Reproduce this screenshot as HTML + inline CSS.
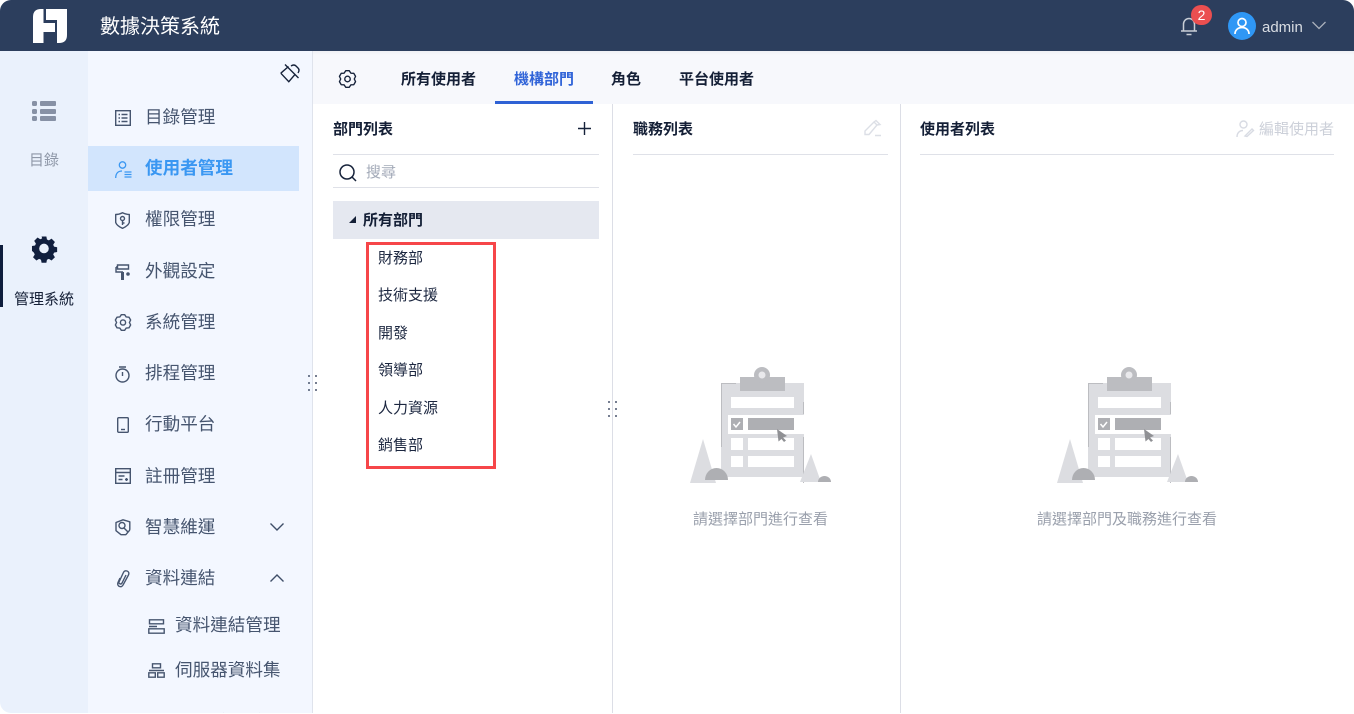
<!DOCTYPE html>
<html lang="zh-Hant"><head><meta charset="utf-8"><style>
html,body{margin:0;padding:0;background:#fff}
body{width:1354px;height:714px;position:relative;overflow:hidden;font-family:"Liberation Sans","Noto Sans CJK TC",sans-serif;color:#141f36}
.a{position:absolute;white-space:nowrap}
svg{position:absolute;overflow:visible}
#app{position:absolute;left:0;top:0;width:1354px;height:713px;border-radius:11px;overflow:hidden;background:#fff}
.m{position:absolute;left:145px;font-size:17.6px;line-height:26px;color:#46556f;white-space:nowrap}
.i{fill:none;stroke:#46556f;stroke-width:1.4}
.h{position:absolute;font-size:15px;font-weight:700;line-height:20px;color:#141f36;white-space:nowrap}
.l{position:absolute;left:378px;font-size:15px;line-height:20px;color:#1c2740;white-space:nowrap}
.ln{position:absolute;height:1px;background:#dfe1e8}
.d{position:absolute;width:2px;height:2px;background:#4a566e;border-radius:1px}
</style></head><body><div id="app">
<div class="a" style="left:0;top:0;width:1354px;height:51px;background:#2c3e5d"></div>
<svg style="left:33px;top:9px" width="34" height="34" viewBox="0 0 34 34"><path fill="#fff" d="M0 34V8Q0 0 8 0h2.500V14H22v9H10.500v11z"/><path fill="#fff" d="M13 0h21v26q0 8-8 8h-2V11H13z"/></svg>
<div class="a" style="left:100px;top:13px;font-size:20px;line-height:29px;color:#fff">數據決策系統</div>
<svg style="left:1180px;top:16px" width="18" height="20" viewBox="0 0 18 20" fill="none" stroke="#c9ced6" stroke-width="1.5"><path d="M1 15h16M3.500 15V8a5.500 5.500 0 0 1 11 0v7M6.500 18.500h5"/></svg>
<div class="a" style="left:1191px;top:5px;width:21px;height:20px;border-radius:10px;background:#eb4f50;color:#fff;font-size:14px;line-height:20px;text-align:center">2</div>
<div class="a" style="left:1228px;top:12px;width:28px;height:28px;border-radius:14px;background:#2f97f5"></div>
<svg style="left:1234px;top:17px" width="16" height="18" viewBox="0 0 16 18" fill="none" stroke="#fff" stroke-width="1.700"><circle cx="8" cy="5.500" r="4"/><path d="M1 17c0-4 3-6.500 7-6.500s7 2.500 7 6.500"/></svg>
<div class="a" style="left:1262px;top:18px;font-size:15px;line-height:20px;color:#d9dde3">admin</div>
<svg style="left:1312px;top:21px" width="14" height="9" viewBox="0 0 14 9" fill="none" stroke="#aab0bb" stroke-width="1.300"><path d="M.5 1L7 7.500 13.500 1"/></svg>

<div class="a" style="left:0;top:51px;width:88px;height:663px;background:#eaf1fc"></div>
<div class="a" style="left:88px;top:51px;width:224px;height:663px;background:#f3f7ff"></div>
<div class="a" style="left:312px;top:51px;width:1px;height:663px;background:#dfe3ec"></div>
<svg style="left:31px;top:100px" width="26" height="23" viewBox="0 0 26 23" fill="#8791a5"><rect x="1" y="1" width="5" height="5" rx="1.500"/><rect x="1" y="9" width="5" height="5" rx="1.500"/><rect x="1" y="16" width="5" height="5" rx="1.500"/><rect x="9" y="1" width="16" height="5" rx="1"/><rect x="9" y="9" width="16" height="5" rx="1"/><rect x="9" y="16" width="16" height="5" rx="1"/></svg>
<div class="a" style="left:29px;top:151px;font-size:15px;line-height:20px;color:#8f98a8">目錄</div>
<div class="a" style="left:0;top:245px;width:3px;height:62px;background:#0e1d3c"></div>
<svg style="left:31px;top:236px" width="26" height="26" viewBox="0 0 26 26"><path fill="#111f3e" fill-rule="evenodd" d="M10.500 1h5l.6 3.200 2 .9 2.800-1.800 3.500 3.500-1.800 2.800.9 2 3.200.6v5l-3.200.6-.9 2 1.800 2.800-3.500 3.500-2.800-1.800-2 .9-.6 3.200h-5l-.6-3.200-2-.9-2.800 1.800-3.500-3.500 1.800-2.800-.9-2L.5 16v-5l3.200-.6.9-2-1.800-2.800 3.500-3.500 2.800 1.800 2-.9zM13 8.500a5 5 0 1 0 0 10 5 5 0 0 0 0-10z" transform="translate(.5 -.5) scale(.96)"/></svg>
<div class="a" style="left:14px;top:290px;font-size:15px;line-height:20px;color:#141f36">管理系統</div>

<svg style="left:280px;top:64px" width="19" height="19" viewBox="0 0 19 19" fill="none" stroke="#16223a" stroke-width="1.400"><path d="M.8 9.200L8.500 2.500M.8 9.200l8 8.500 6-7M5 .5L18.500 14M11 2q3-2 5 0l2 2q2 2 0 5"/></svg>
<div class="a" style="left:88px;top:146px;width:211px;height:45px;background:#d2e5fd"></div>

<svg style="left:115px;top:110px" width="16" height="16" viewBox="0 0 16 16" class="i"><rect x=".7" y=".7" width="14.600" height="14.600"/><path d="M3.500 4.500h1.500M6.500 4.500h6M3.500 8h1.500M6.500 8h6M3.500 11.500h1.500M6.500 11.500h6"/></svg>
<div class="m" style="top:104px">目錄管理</div>
<svg style="left:115px;top:161px" width="17" height="17" viewBox="0 0 17 17" fill="none" stroke="#3a97f2" stroke-width="1.300"><circle cx="7.500" cy="4" r="3.200"/><path d="M.7 17c0-5 2.800-7 6.300-7M9.500 11h7M9.500 13.500h7M9.500 16h7"/></svg>
<div class="m" style="top:155px;color:#3a97f2;font-weight:700">使用者管理</div>
<svg style="left:115px;top:212px" width="15" height="17" viewBox="0 0 15 17" class="i"><path d="M.7 2.500Q4 2.500 7.500.7 11 2.500 14.300 2.500v8Q13 14 7.500 16.300 2 14 .7 10.500z" stroke-linejoin="round"/><circle cx="7.500" cy="6.500" r="2"/><path d="M7.500 8.500v4.500M7.500 11h2"/></svg>
<div class="m" style="top:206px">權限管理</div>
<svg style="left:115px;top:264px" width="16" height="16" viewBox="0 0 16 16"><path class="i" d="M2.500 1h11v4h-11zM1 3h1.500M1 3v5h7"/><rect x="6" y="8" width="3" height="8" fill="#46556f"/><circle cx="13" cy="10" r="1.800" fill="#46556f"/></svg>
<div class="m" style="top:258px">外觀設定</div>
<svg style="left:115px;top:314px" width="16" height="17" viewBox="0 0 16 17" class="i"><path stroke-linejoin="round" d="M6.340.68H9.660L11.200 2.960 13.940 3.150 15.610 6.030 14.400 8.500 15.610 10.970 13.940 13.850 11.200 14.040 9.660 16.320H6.340L4.800 14.040 2.060 13.850.39 10.970 1.600 8.500.39 6.030 2.060 3.150 4.800 2.960z"/><circle cx="8" cy="8.500" r="2.600"/></svg>
<div class="m" style="top:309px">系統管理</div>
<svg style="left:115px;top:366px" width="15" height="17" viewBox="0 0 15 17" class="i"><circle cx="7.500" cy="9.500" r="6.500"/><path d="M4 1h7M7.500 6v4"/></svg>
<div class="m" style="top:360px">排程管理</div>
<svg style="left:117px;top:417px" width="12" height="16" viewBox="0 0 12 16" class="i"><rect x=".7" y=".7" width="10.600" height="14.600" rx="1"/><path d="M4 12.500h4"/></svg>
<div class="m" style="top:411px">行動平台</div>
<svg style="left:115px;top:468px" width="16" height="16" viewBox="0 0 16 16" class="i"><rect x=".7" y=".7" width="14.600" height="14.600"/><path d="M.7 4.500h14.600M3.500 8h6M3.500 11.500h4M10 11.500h3M11.500 10v3"/></svg>
<div class="m" style="top:463px">註冊管理</div>
<svg style="left:115px;top:519px" width="16" height="17" viewBox="0 0 16 17" class="i"><path d="M8 .8l6.800 2v7.400c0 1-.5 1.500-1 2l-3 3.500H6l-5-4V3.500z" stroke-linejoin="round"/><circle cx="7" cy="6.500" r="3"/><path d="M9 9l4 4"/></svg>
<div class="m" style="top:514px">智慧維運</div>
<svg style="left:270px;top:523px" width="14" height="8" viewBox="0 0 14 8" fill="none" stroke="#3f4e68" stroke-width="1.400"><path d="M.5.500L7 7 13.500.500"/></svg>
<svg style="left:115px;top:570px" width="16" height="18" viewBox="0 0 16 18" class="i"><path d="M5 8L3 12.500c-.8 2 .2 3.500 1.500 4s3 0 3.800-2L13.500 5c.8-2 .2-3.500-1.500-4S9 1 8.200 3L4 12c-.4 1 .5 2 1.500 2s1.400-.5 1.800-1.500L11 5"/></svg>
<div class="m" style="top:565px">資料連結</div>
<svg style="left:270px;top:574px" width="14" height="8" viewBox="0 0 14 8" fill="none" stroke="#3f4e68" stroke-width="1.400"><path d="M.5 7.500L7 1l6.500 6.500"/></svg>
<svg style="left:148px;top:619px" width="17" height="15" viewBox="0 0 17 15" class="i"><path d="M1.500.8h14v4h-14zM.8 9.800h15.400v4.400H.8zM1 7.500h8"/></svg>
<div class="m" style="left:175px;top:612px">資料連結管理</div>
<svg style="left:148px;top:663px" width="17" height="15" viewBox="0 0 17 15" class="i"><path d="M4.500.8h8v4h-8zM.8 9.800h6.500v4.400H.8zM9.700 9.800h6.500v4.400H9.700zM1 7.500h15"/></svg>
<div class="m" style="left:175px;top:657px">伺服器資料集</div>
<div class="m" style="left:175px;top:709px">&#160;模板資料集</div>

<div class="a" style="left:313px;top:51px;width:1041px;height:53px;background:#f7f8fc"></div>
<div class="a" style="left:313px;top:51px;width:1041px;height:4px;background:linear-gradient(#eff0f4,#f7f8fc)"></div>
<svg style="left:339px;top:70px" width="17" height="18" viewBox="0 0 16 17" fill="none" stroke="#16223a" stroke-width="1.300"><path stroke-linejoin="round" d="M6.340.68H9.660L11.200 2.960 13.940 3.150 15.610 6.030 14.400 8.500 15.610 10.970 13.940 13.850 11.200 14.040 9.660 16.320H6.340L4.800 14.040 2.060 13.850.39 10.970 1.600 8.500.39 6.030 2.060 3.150 4.800 2.960z"/><circle cx="8" cy="8.500" r="2.600"/></svg>
<div class="h" style="left:401px;top:70px">所有使用者</div>
<div class="h" style="left:514px;top:70px;color:#3164d8">機構部門</div>
<div class="a" style="left:495px;top:101px;width:98px;height:3px;background:#2f62d5"></div>
<div class="h" style="left:611px;top:70px">角色</div>
<div class="h" style="left:679px;top:70px">平台使用者</div>

<div class="a" style="left:612px;top:104px;width:1px;height:610px;background:#dcdee6"></div>
<div class="a" style="left:900px;top:104px;width:1px;height:610px;background:#dcdee6"></div>
<div class="h" style="left:333px;top:120px">部門列表</div>
<svg style="left:578px;top:122px" width="13" height="13" viewBox="0 0 13 13" stroke="#16223a" stroke-width="1.400"><path d="M6.500 0v13M0 6.500h13"/></svg>
<div class="ln" style="left:333px;top:154px;width:266px"></div>
<svg style="left:339px;top:164px" width="18" height="18" viewBox="0 0 18 18" fill="none" stroke="#16223a" stroke-width="1.500"><circle cx="8" cy="8" r="7"/><path d="M13 13l4 4"/></svg>
<div class="a" style="left:366px;top:163px;font-size:15px;line-height:20px;color:#a3aab8">搜尋</div>
<div class="ln" style="left:333px;top:187px;width:266px"></div>
<div class="a" style="left:333px;top:201px;width:266px;height:38px;background:#e5e8f0"></div>
<svg style="left:349px;top:216px" width="7" height="7" viewBox="0 0 7 7"><path fill="#141f36" d="M7 0v7H0z"/></svg>
<div class="h" style="left:363px;top:211px">所有部門</div>
<div class="a" style="left:366px;top:242px;width:130px;height:227px;box-sizing:border-box;border:3px solid #f64649"></div>
<div class="l" style="top:249px">財務部</div>
<div class="l" style="top:286px">技術支援</div>
<div class="l" style="top:324px">開發</div>
<div class="l" style="top:361px">領導部</div>
<div class="l" style="top:399px">人力資源</div>
<div class="l" style="top:436px">銷售部</div>

<div class="h" style="left:633px;top:120px">職務列表</div>
<svg style="left:864px;top:120px" width="18" height="17" viewBox="0 0 18 17" fill="none" stroke="#dcdfe6" stroke-width="1.400"><path d="M1 11L10 2l3 3-8 9.500H1zM10 2l2-1.500 4 4-3 .5M11 15.500h6"/></svg>
<div class="ln" style="left:633px;top:154px;width:255px"></div>
<div class="h" style="left:920px;top:120px">使用者列表</div>
<svg style="left:1236px;top:120px" width="18" height="17" viewBox="0 0 18 17" fill="none" stroke="#d8dbe3" stroke-width="1.400"><circle cx="7.500" cy="4.500" r="3.500"/><path d="M1 17c0-4 2.500-6.500 6-6.500M9 16l7-7 1.500 1.500L11 16.500z"/></svg>
<div class="a" style="left:1259px;top:120px;font-size:15px;line-height:20px;color:#ccd0d9">編輯使用者</div>
<div class="ln" style="left:920px;top:154px;width:414px"></div>

<svg style="left:689px;top:367px" width="143" height="116" viewBox="0 0 143 116">
<rect x="32" y="16" width="83" height="94" fill="#dcdde1"/><path fill="#bcbdc1" d="M32 16h1v64h-1zM32 16h15v1H32zM114 35h1v12h-1zM114 70h1v46h-1z"/>
<rect x="42" y="30" width="63" height="11" fill="#fff"/><rect x="39" y="48" width="76" height="19" fill="#fff"/>
<rect x="42" y="51" width="12" height="12" fill="#aeafb3"/><path d="M44.500 57l2.500 3 4-5" fill="none" stroke="#fff" stroke-width="1.500"/><rect x="59" y="51" width="46" height="12" fill="#aeafb3"/>
<rect x="42" y="71" width="12" height="12" fill="#fff"/><rect x="59" y="71" width="46" height="12" fill="#fff"/><rect x="42" y="89" width="12" height="11" fill="#fff"/><rect x="59" y="89" width="46" height="11" fill="#fff"/>
<path d="M88 62l10 7-4 1.500 3 3-2 1.500-2.500-3-3 2.500z" fill="#8f9094"/>
<rect x="51" y="10" width="45" height="14" fill="#bcbdc1"/><circle cx="73" cy="8" r="8" fill="#bcbdc1"/><circle cx="73" cy="8" r="3.500" fill="#e9e9ec"/>
<path d="M14 72l13 44H1z" fill="#dcdde1"/><path d="M16 113a11.500 12 0 0 1 23 0z" fill="#aeafb3"/><path d="M122 87l10 28h-21z" fill="#dcdde1"/><path d="M129 115a6.500 6 0 0 1 13 0z" fill="#aeafb3"/></svg>
<svg style="left:1056px;top:367px" width="143" height="116" viewBox="0 0 143 116">
<rect x="32" y="16" width="83" height="94" fill="#dcdde1"/><path fill="#bcbdc1" d="M32 16h1v64h-1zM32 16h15v1H32zM114 35h1v12h-1zM114 70h1v46h-1z"/>
<rect x="42" y="30" width="63" height="11" fill="#fff"/><rect x="39" y="48" width="76" height="19" fill="#fff"/>
<rect x="42" y="51" width="12" height="12" fill="#aeafb3"/><path d="M44.500 57l2.500 3 4-5" fill="none" stroke="#fff" stroke-width="1.500"/><rect x="59" y="51" width="46" height="12" fill="#aeafb3"/>
<rect x="42" y="71" width="12" height="12" fill="#fff"/><rect x="59" y="71" width="46" height="12" fill="#fff"/><rect x="42" y="89" width="12" height="11" fill="#fff"/><rect x="59" y="89" width="46" height="11" fill="#fff"/>
<path d="M88 62l10 7-4 1.500 3 3-2 1.500-2.500-3-3 2.500z" fill="#8f9094"/>
<rect x="51" y="10" width="45" height="14" fill="#bcbdc1"/><circle cx="73" cy="8" r="8" fill="#bcbdc1"/><circle cx="73" cy="8" r="3.500" fill="#e9e9ec"/>
<path d="M14 72l13 44H1z" fill="#dcdde1"/><path d="M16 113a11.500 12 0 0 1 23 0z" fill="#aeafb3"/><path d="M122 87l10 28h-21z" fill="#dcdde1"/><path d="M129 115a6.500 6 0 0 1 13 0z" fill="#aeafb3"/></svg>
<div class="a" style="left:693px;top:510px;font-size:15px;line-height:20px;color:#9aa0ac">請選擇部門進行查看</div>
<div class="a" style="left:1037px;top:510px;font-size:15px;line-height:20px;color:#9aa0ac">請選擇部門及職務進行查看</div>

<div class="d" style="left:308px;top:375px"></div><div class="d" style="left:315px;top:375px"></div><div class="d" style="left:308px;top:382px"></div><div class="d" style="left:315px;top:382px"></div><div class="d" style="left:308px;top:389px"></div><div class="d" style="left:315px;top:389px"></div>
<div class="d" style="left:608px;top:401px"></div><div class="d" style="left:615px;top:401px"></div><div class="d" style="left:608px;top:408px"></div><div class="d" style="left:615px;top:408px"></div><div class="d" style="left:608px;top:415px"></div><div class="d" style="left:615px;top:415px"></div>
</div></body></html>
